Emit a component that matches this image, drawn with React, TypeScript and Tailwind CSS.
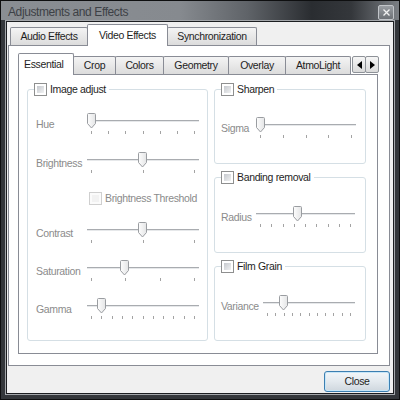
import React from "react";

const F = "font-['Liberation_Sans',Arial,sans-serif] tracking-[-0.35px]";

function Slider({ w, ticks, pos }: { w: number; ticks: number; pos: number }) {
  const start = 4;
  const end = w - 5;
  const c = start + pos * (end - start);
  const xs = Array.from({ length: ticks }, (_, i) => Math.round(start + (i * (end - start)) / (ticks - 1)));
  return (
    <div className="relative h-[24px] shrink-0" style={{ width: w }}>
      <div className="absolute left-0 right-0 top-[8px] h-px bg-[#a9acb0]" />
      <div className="absolute left-0 right-0 top-[9px] h-px bg-[#e6e8ea]" />
      {xs.map((x, i) => (
        <div key={i} className="absolute top-[19px] w-px h-[3px] bg-[#a3a3a3]" style={{ left: x }} />
      ))}
      <svg className="absolute top-[1px]" style={{ left: Math.round(c - 4.5) }} width="9" height="16" viewBox="0 0 9 16">
        <defs>
          <linearGradient id="th" x1="0" y1="0" x2="1" y2="0">
            <stop offset="0" stopColor="#fdfdfd" />
            <stop offset="1" stopColor="#e4e5e6" />
          </linearGradient>
        </defs>
        <path d="M1.5 0.5 H7.5 A1 1 0 0 1 8.5 1.5 V10.5 L4.5 15 L0.5 10.5 V1.5 A1 1 0 0 1 1.5 0.5 Z" fill="url(#th)" stroke="#9a9da1" />
      </svg>
    </div>
  );
}

function Check({ disabled }: { disabled?: boolean }) {
  return (
    <div
      className={`w-[13px] h-[13px] shrink-0 border p-[2px] ${
        disabled ? "border-[#cfcfcf] bg-[#fbfbfb]" : "border-[#8e8f8f] bg-white"
      }`}
    >
      <div className={`w-full h-full ${disabled ? "bg-[#f2f2f2]" : "bg-gradient-to-br from-[#c6c9ce] to-[#f1f2f3]"}`} />
    </div>
  );
}

function Legend({ title }: { title: string }) {
  return (
    <div className="absolute left-[6px] top-[-7px] flex items-center gap-[3px] bg-white pr-[3px] h-[13px]">
      <Check />
      <span className="text-[#1e1e1e] text-[10.5px] leading-[13px]">{title}</span>
    </div>
  );
}

function Row({ label, lw, w, ticks, pos, mt, pl }: { label: string; lw: number; w: number; ticks: number; pos: number; mt: string; pl: string }) {
  return (
    <div className={`flex items-center ${mt} ${pl}`}>
      <span className="text-[#8b8b8b] text-[10.5px] leading-[13px] shrink-0 whitespace-nowrap" style={{ width: lw }}>
        {label}
      </span>
      <Slider w={w} ticks={ticks} pos={pos} />
    </div>
  );
}

function OuterTab({ label, selected, w, first }: { label: string; selected?: boolean; w: string; first?: boolean }) {
  return (
    <div
      className={`${w} ${first ? "" : "-ml-px"} flex items-center justify-center border border-[#898c95] border-b-0 rounded-t-[2px] text-[10.5px] text-[#1e1e1e] ${
        selected ? "h-[22px] -mb-px bg-white relative z-10" : "h-[18px] bg-gradient-to-b from-[#f4f4f4] to-[#dcdcdc]"
      }`}
    >
      {label}
    </div>
  );
}

function Arrow({ dir }: { dir: "l" | "r" }) {
  return (
    <div className="w-[14px] h-[17px] border border-[#8e9298] rounded-[2px] bg-gradient-to-b from-[#f6f6f6] to-[#dadada] flex items-center justify-center">
      <svg width="5" height="8" viewBox="0 0 5 8">
        {dir === "l" ? <path d="M5 0 L0 4 L5 8 Z" fill="#000" /> : <path d="M0 0 L5 4 L0 8 Z" fill="#000" />}
      </svg>
    </div>
  );
}

export default function App() {
  return (
    <div className={`w-[400px] h-[400px] bg-[#34373b] border border-[#0e0f10] flex flex-col ${F}`}>
      {/* title bar */}
      <div className="h-[19px] flex items-center justify-between pl-[7px] pr-[5px] bg-[linear-gradient(90deg,#8a8e93_0%,#868a8f_45%,#5f6368_62%,#2a2d31_78%,#34373b_88%,#7b7f84_100%)]">
        <span className="text-[12px] tracking-[-0.4px] text-[#3d4146] leading-none mt-[3px]">Adjustments and Effects</span>
        <div className="w-[16px] h-[15px] mt-[4px] border border-[#c2c5c9] rounded-[2px] bg-gradient-to-b from-[#9a9ea3] to-[#6d7176] flex items-center justify-center">
          <svg width="7" height="7" viewBox="0 0 7 7">
            <path d="M0.5 0.5 L6.5 6.5 M6.5 0.5 L0.5 6.5" stroke="#f2f2f2" strokeWidth="1.3" />
          </svg>
        </div>
      </div>
      {/* client frame */}
      <div className="mx-[4px] border border-[#a3a6aa]">
        <div className="border border-[#1c1e21]">
          <div className="h-[371px] bg-[#f0f0f0] flex flex-col">
            {/* outer tabs */}
            <div className="h-[23px] flex items-end pl-[3px]">
              <OuterTab label="Audio Effects" w="w-[78px]" first />
              <OuterTab label="Video Effects" w="w-[81px]" selected />
              <OuterTab label="Synchronization" w="w-[90px]" />
            </div>
            {/* outer pane */}
            <div className="ml-[1px] w-[382px] h-[321px] border border-[#898c95] bg-white flex flex-col">
              {/* inner tabs */}
              <div className="h-[28px] flex items-end pl-[9px]">
                <div className="w-[56px] h-[22px] -mb-px relative z-10 bg-white border border-b-0 border-[#898c95] rounded-t-[2px] flex items-center pl-[5px] text-[10.5px] text-[#1e1e1e]">
                  Essential
                </div>
                {[
                  ["Crop", "w-[43px]"],
                  ["Colors", "w-[49px]"],
                  ["Geometry", "w-[66px]"],
                  ["Overlay", "w-[58px]"],
                  ["AtmoLight", "w-[66px]"],
                ].map(([l, w]) => (
                  <div
                    key={l}
                    className={`${w} -ml-px h-[18px] border border-b-0 border-[#898c95] rounded-t-[2px] bg-gradient-to-b from-[#f4f4f4] to-[#dcdcdc] flex items-center justify-center text-[10.5px] text-[#1e1e1e]`}
                  >
                    {l}
                  </div>
                ))}
                <div className="flex mb-[1px] ml-[1px]">
                  <Arrow dir="l" />
                  <div className="-ml-px">
                    <Arrow dir="r" />
                  </div>
                </div>
              </div>
              {/* inner pane */}
              <div className="ml-[9px] w-[360px] h-[280px] border border-[#898c95] bg-white flex gap-[6px] pl-[8px] pt-[14px]">
                {/* left group */}
                <div className="relative w-[181px] h-[252px] border border-[#d5dfe5] rounded-[3px] shrink-0">
                  <Legend title="Image adjust" />
                  <Row label="Hue" lw={51} w={112} ticks={7} pos={0} mt="mt-[22px]" pl="pl-[8px]" />
                  <Row label="Brightness" lw={51} w={112} ticks={3} pos={0.5} mt="mt-[15px]" pl="pl-[8px]" />
                  <div className="flex items-center gap-[3px] mt-[17px] pl-[61px] h-[13px]">
                    <Check disabled />
                    <span className="text-[#8b8b8b] text-[10.5px] leading-[13px] whitespace-nowrap">Brightness Threshold</span>
                  </div>
                  <Row label="Contrast" lw={51} w={112} ticks={3} pos={0.5} mt="mt-[16px]" pl="pl-[8px]" />
                  <Row label="Saturation" lw={51} w={112} ticks={4} pos={0.33} mt="mt-[14px]" pl="pl-[8px]" />
                  <Row label="Gamma" lw={51} w={112} ticks={11} pos={0.1} mt="mt-[14px]" pl="pl-[8px]" />
                </div>
                {/* right groups */}
                <div className="flex flex-col gap-[13px]">
                  <div className="relative w-[152px] h-[75px] border border-[#d5dfe5] rounded-[3px]">
                    <Legend title="Sharpen" />
                    <Row label="Sigma" lw={35} w={100} ticks={5} pos={0} mt="mt-[26px]" pl="pl-[6px]" />
                  </div>
                  <div className="relative w-[152px] h-[76px] border border-[#d5dfe5] rounded-[3px]">
                    <Legend title="Banding removal" />
                    <Row label="Radius" lw={35} w={99} ticks={9} pos={0.42} mt="mt-[27px]" pl="pl-[6px]" />
                  </div>
                  <div className="relative w-[152px] h-[75px] border border-[#d5dfe5] rounded-[3px]">
                    <Legend title="Film Grain" />
                    <Row label="Variance" lw={42} w={92} ticks={11} pos={0.2} mt="mt-[27px]" pl="pl-[6px]" />
                  </div>
                </div>
              </div>
            </div>
            {/* bottom */}
            <div className="flex justify-end pr-[3px] pt-[5px]">
              <div className="w-[66px] h-[21px] rounded-[3px] border border-[#3c7fb1] bg-gradient-to-b from-[#f2f6f9] via-[#e3e9ee] to-[#cfd7de] shadow-[inset_0_0_0_1px_#c7e6f8] flex items-center justify-center text-[10.5px] text-[#1e1e1e]">
                Close
              </div>
            </div>
          </div>
        </div>
      </div>
    </div>
  );
}
